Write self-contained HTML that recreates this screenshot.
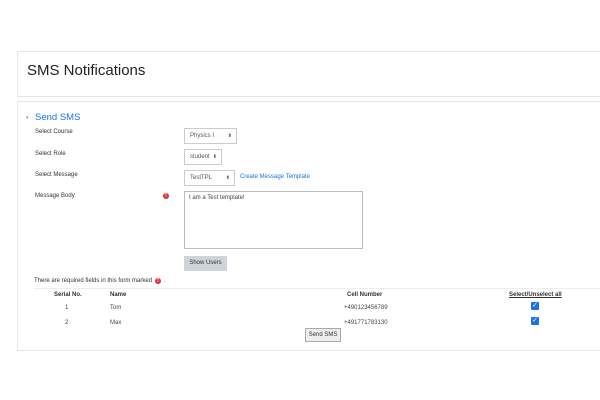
<!DOCTYPE html>
<html><head><style>
body{margin:0;width:600px;height:400px;background:#fff;font-family:"Liberation Sans",sans-serif;color:#333;position:relative;overflow:hidden}
.a{position:absolute;white-space:nowrap}
.card{position:absolute;border:1px solid #e6e6e6;background:#fff;border-right:none}
.lbl{font-size:6px;color:#333}
.sel{position:absolute;border:1px solid #ccc;background:#fff;font-size:6px;color:#555;box-sizing:border-box;padding-left:5px;line-height:14px}
.sel span{position:absolute;right:4px;top:0;font-size:5px}
.btn{position:absolute;background:#ced4da;font-size:6px;color:#333;text-align:center;box-sizing:border-box}
.th{font-size:6px;font-weight:bold}
.td{font-size:6px;color:#444}
.cb{position:absolute;width:8px;height:8px;background:#1a73e8;border-radius:1px;color:#fff;font-size:7px;line-height:8px;text-align:center}
.err{position:absolute;width:6px;height:6px;border-radius:50%;background:#d33;color:#fff;font-size:5px;line-height:6px;text-align:center;font-weight:bold}
</style></head><body>
<div class="card" style="left:17px;top:51px;width:600px;height:44px"></div>
<div class="a" style="left:27px;top:62px;font-size:15px;color:#222">SMS Notifications</div>
<div class="card" style="left:17px;top:101px;width:600px;height:248px"></div>
<div class="a" style="left:26px;top:115px;font-size:5px;color:#888">▾</div>
<div class="a" style="left:35px;top:112px;font-size:9.5px;color:#1a73e8">Send SMS</div>
<div class="a lbl" style="left:35px;top:129px">Select Course</div>
<div class="a lbl" style="left:35px;top:151px">Select Role</div>
<div class="a lbl" style="left:35px;top:172px">Select Message</div>
<div class="a lbl" style="left:35px;top:193px">Message Body</div>
<div class="err" style="left:163px;top:193px">!</div>
<div class="sel" style="left:184px;top:128px;width:53px;height:16px">Physics I<span>⬍</span></div>
<div class="sel" style="left:184px;top:149px;width:38px;height:16px">student<span>⬍</span></div>
<div class="sel" style="left:184px;top:170px;width:51px;height:16px">TestTPL<span>⬍</span></div>
<div class="a" style="left:240px;top:174px;font-size:6px;color:#1a73e8">Create Message Template</div>
<div style="position:absolute;left:184px;top:191px;width:179px;height:58px;border:1px solid #bbb;box-sizing:border-box;font-size:6px;padding:3px 4px;color:#444">I am a Test template!</div>
<div class="btn" style="left:184px;top:256px;width:43px;height:15px;line-height:15px">Show Users</div>
<div class="a lbl" style="left:34px;top:278px">There are required fields in this form marked</div>
<div class="err" style="left:155px;top:278px">!</div>
<div class="a lbl" style="left:164px;top:278px">.</div>
<div style="position:absolute;left:34px;top:288px;width:580px;border-top:1px solid #eee"></div>
<div class="a th" style="left:54px;top:292px">Serial No.</div>
<div class="a th" style="left:110px;top:292px">Name</div>
<div class="a th" style="left:347px;top:292px">Cell Number</div>
<div class="a th" style="left:509px;top:292px;text-decoration:underline">Select/Unselect all</div>
<div class="a td" style="left:65px;top:305px">1</div>
<div class="a td" style="left:110px;top:305px">Tom</div>
<div class="a td" style="left:344px;top:305px">+490123456789</div>
<div class="cb" style="left:531px;top:302px">✓</div>
<div class="a td" style="left:65px;top:320px">2</div>
<div class="a td" style="left:110px;top:320px">Max</div>
<div class="a td" style="left:344px;top:320px">+491771783130</div>
<div class="cb" style="left:531px;top:317px">✓</div>
<div class="btn" style="left:305px;top:328px;width:36px;height:14px;line-height:12px;background:#eee;border:1px solid #aaa">Send SMS</div>
</body></html>
